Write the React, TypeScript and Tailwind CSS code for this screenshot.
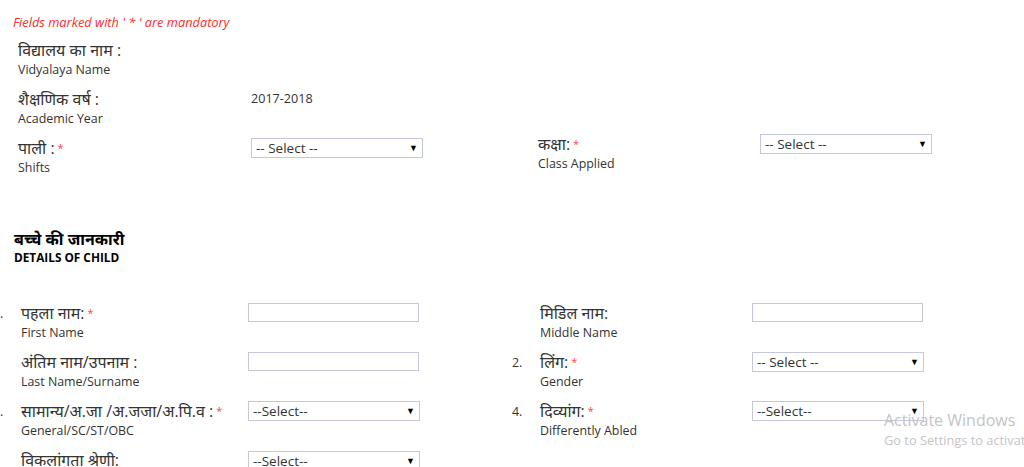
import React from 'react';

const font = { fontFamily: '"Open Sans", "Noto Sans", "Noto Sans Devanagari", sans-serif' };

function Star() {
  return <span className="text-[#f44] text-[11px] ml-[3px] align-top">*</span>;
}

function Label({ hi, en, req }: { hi: string; en: string; req?: boolean }) {
  return (
    <div>
      <div className="text-[16px] leading-[22px] text-[#333]">
        {hi}
        {req && <Star />}
      </div>
      <div className="text-[12.4px] leading-[18px] text-[#333]">{en}</div>
    </div>
  );
}

function Select({ text }: { text: string }) {
  return (
    <div className="flex h-[20px] w-[172px] items-center justify-between border border-[#c5c8dc] bg-white pl-[4px] pr-[4px] text-[13.5px] text-[#333]">
      <span>{text}</span>
      <span className="text-[9px] text-black">▼</span>
    </div>
  );
}

function TextBox() {
  return <div className="h-[19px] w-[171px] border border-[#c5c8dc] bg-white" />;
}

function Num({ n }: { n: string }) {
  return <div className="w-[28px] pt-[3px] text-[12.4px] leading-[18px] text-[#333]">{n}</div>;
}

export default function App() {
  return (
    <div className="relative h-[467px] w-[1024px] overflow-hidden bg-white" style={font}>
      <div className="pt-[13px] pl-[13px] text-[12.8px] leading-[18px] italic text-[#ff2b2b]">
        Fields marked with ' * ' are mandatory
      </div>

      {/* School info */}
      <div className="mt-[8px] pl-[18px]">
        <div className="flex h-[49px]">
          <div className="w-[233px]">
            <Label hi="विद्यालय का नाम :" en="Vidyalaya Name" />
          </div>
        </div>
        <div className="flex h-[49px]">
          <div className="w-[233px]">
            <Label hi="शैक्षणिक वर्ष :" en="Academic Year" />
          </div>
          <div className="text-[12.6px] leading-[22px] text-[#333]">2017-2018</div>
        </div>
        <div className="flex h-[49px]">
          <div className="w-[233px]">
            <Label hi="पाली :" en="Shifts" req />
          </div>
          <div className="w-[287px] pt-[1px]">
            <Select text="-- Select --" />
          </div>
          <div className="-mt-[4px] flex">
            <div className="w-[222px]">
              <Label hi="कक्षा:" en="Class Applied" req />
            </div>
            <div className="pt-[1px]">
              <Select text="-- Select --" />
            </div>
          </div>
        </div>
      </div>

      {/* Details of child */}
      <div className="mt-[42px] pl-[14px]">
        <div className="text-[16px] leading-[22px] font-bold text-black">बच्चे की जानकारी</div>
        <div className="text-[11.8px] leading-[14px] font-bold text-black">DETAILS OF CHILD</div>
      </div>

      <div className="mt-[38px] -ml-[7px]">
        {[
          {
            ln: '1.', lhi: 'पहला नाम:', len: 'First Name', lreq: true, lf: <TextBox />,
            rn: '', rhi: 'मिडिल नाम:', ren: 'Middle Name', rreq: false, rf: <TextBox />,
          },
          {
            ln: '', lhi: 'अंतिम नाम/उपनाम :', len: 'Last Name/Surname', lreq: false, lf: <TextBox />,
            rn: '2.', rhi: 'लिंग:', ren: 'Gender', rreq: true, rf: <Select text="-- Select --" />,
          },
          {
            ln: '3.', lhi: 'सामान्य/अ.जा /अ.जजा/अ.पि.व :', len: 'General/SC/ST/OBC', lreq: true, lf: <Select text="--Select--" />,
            rn: '4.', rhi: 'दिव्यांग:', ren: 'Differently Abled', rreq: true, rf: <Select text="--Select--" />,
          },
        ].map((r, i) => (
          <div key={i} className="flex h-[49px]">
            <Num n={r.ln} />
            <div className="w-[227px]">
              <Label hi={r.lhi} en={r.len} req={r.lreq} />
            </div>
            <div className="w-[264px] pt-[1px]">{r.lf}</div>
            <Num n={r.rn} />
            <div className="w-[212px]">
              <Label hi={r.rhi} en={r.ren} req={r.rreq} />
            </div>
            <div className="pt-[1px]">{r.rf}</div>
          </div>
        ))}
        <div className="flex h-[49px]">
          <Num n="" />
          <div className="w-[227px]">
            <div className="text-[16px] leading-[22px] text-[#333]">विकलांगता श्रेणी:</div>
          </div>
          <div className="pt-[2px]">
            <Select text="--Select--" />
          </div>
        </div>
      </div>

      {/* Windows watermark */}
      <div className="absolute left-[884px] top-[409px] text-[#c4c4c4]" style={{ fontFamily: '"Open Sans", "Noto Sans", sans-serif' }}>
        <div className="text-[16px] leading-[22px] whitespace-nowrap">Activate Windows</div>
        <div className="text-[12.8px] leading-[18px] whitespace-nowrap">Go to Settings to activate Windows.</div>
      </div>
    </div>
  );
}
